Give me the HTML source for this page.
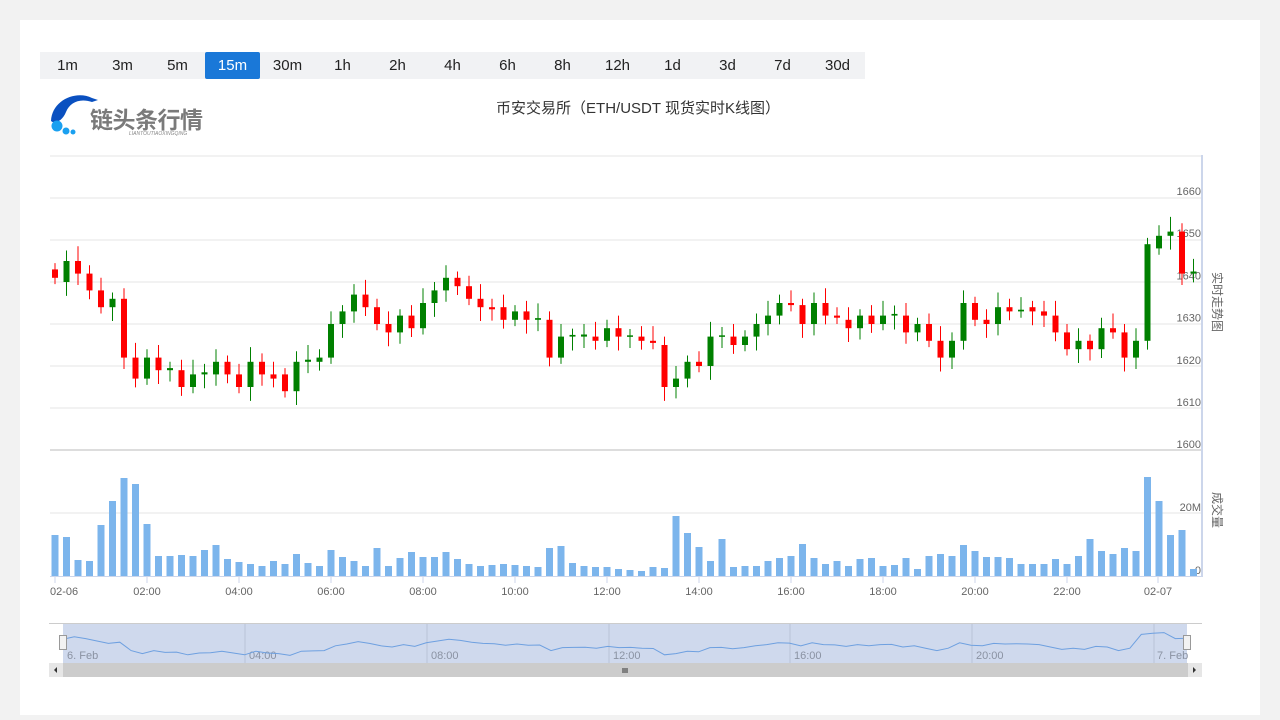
<!DOCTYPE html>
<html><head><meta charset="utf-8">
<style>
body{margin:0;background:#f2f2f2;font-family:"Liberation Sans","Noto Sans CJK SC",sans-serif;}
#card{position:absolute;left:20px;top:20px;width:1240px;height:695px;background:#fff;}
#tf{position:absolute;left:40px;top:52px;width:825px;height:27px;background:#f1f2f4;display:flex;}
#tf div{width:55px;height:27px;line-height:28px;text-align:center;font-size:15px;color:#222;}
#tf div.a{background:#1a78d8;color:#fff;border-radius:2px;}
svg{position:absolute;left:0;top:0;}
</style></head><body>
<div id="card"></div>
<div id="tf"><div>1m</div><div>3m</div><div>5m</div><div class="a">15m</div><div>30m</div><div>1h</div><div>2h</div><div>4h</div><div>6h</div><div>8h</div><div>12h</div><div>1d</div><div>3d</div><div>7d</div><div>30d</div></div>
<svg id="s" width="1280" height="720" xmlns="http://www.w3.org/2000/svg">
<g>
<path d="M51 121 C52 100 76 90 92 98 L98 100 L92 102 C80 98 70 102 66 112 C62 122 54 124 51 121Z" fill="#0a50c0"/>
<circle cx="57" cy="126" r="5.5" fill="#1aa0f0"/><circle cx="66" cy="131" r="3.5" fill="#1aa0f0"/><circle cx="73" cy="132" r="2.5" fill="#1aa0f0"/>
<text x="90" y="128" font-size="23" font-weight="bold" fill="#7a7a7a" letter-spacing="-0.5" font-family="Liberation Sans,Noto Sans CJK SC,sans-serif">链头条行情</text>
<text x="129" y="135" font-size="5" fill="#888" font-style="italic">LIANTOUTIAOXINGQING</text>
</g>
<text x="638" y="113" font-size="15" fill="#333" text-anchor="middle" font-family="Liberation Sans,Noto Sans CJK SC,sans-serif">币安交易所（ETH/USDT 现货实时K线图）</text>
<g id="g"></g>
</svg>
<script>
const C=[[1643,1641],[1640,1645],[1645,1642],[1642,1638],[1638,1634],[1634,1636],[1636,1622],[1622,1617],[1617,1622],[1622,1619],[1619,1619.5],[1619,1615],[1615,1618],[1618,1618.5],[1618,1621],[1621,1618],[1618,1615],[1615,1621],[1621,1618],[1618,1617],[1618,1614],[1614,1621],[1621,1621.5],[1621,1622],[1622,1630],[1630,1633],[1633,1637],[1637,1634],[1634,1630],[1630,1628],[1628,1632],[1632,1629],[1629,1635],[1635,1638],[1638,1641],[1641,1639],[1639,1636],[1636,1634],[1634,1633.5],[1634,1631],[1631,1633],[1633,1631],[1631,1631.4],[1631,1622],[1622,1627],[1627,1627.4],[1627,1627.5],[1627,1626],[1626,1629],[1629,1627],[1627,1627.3],[1627,1626],[1626,1625.5],[1625,1615],[1615,1617],[1617,1621],[1621,1620],[1620,1627],[1627,1627.3],[1627,1625],[1625,1627],[1627,1630],[1630,1632],[1632,1635],[1635,1634.5],[1634.5,1630],[1630,1635],[1635,1632],[1632,1631.5],[1631,1629],[1629,1632],[1632,1630],[1630,1632],[1632,1632.4],[1632,1628],[1628,1630],[1630,1626],[1626,1622],[1622,1626],[1626,1635],[1635,1631],[1631,1630],[1630,1634],[1634,1633],[1633,1633.4],[1634,1633],[1633,1632],[1632,1628],[1628,1624],[1624,1626],[1626,1624],[1624,1629],[1629,1628],[1628,1622],[1622,1626],[1626,1649],[1648,1651],[1651,1652],[1652,1642],[1642,1642.5]];
const V=[41,39,16,15,51,75,98,92,52,20,20,21,20,26,31,17,14,12,10,15,12,22,13,10,26,19,15,10,28,10,18,24,19,19,24,17,12,10,11,12,11,10,9,28,30,13,10,9,9,7,6,5,9,8,60,43,29,15,37,9,10,10,15,18,20,32,18,12,15,10,17,18,10,11,18,7,20,22,20,31,25,19,19,18,12,12,12,17,12,20,37,25,22,28,25,99,75,41,46,7];
let h='';
const py=p=>198+(1660-p)*4.2;
[1670,1660,1650,1640,1630,1620,1610].forEach(p=>{h+=`<line x1="50" x2="1202" y1="${py(p)}" y2="${py(p)}" stroke="#e6e6e6"/>`;});
h+=`<line x1="50" x2="1202" y1="450" y2="450" stroke="#ddd" stroke-width="2"/>`;
h+=`<line x1="50" x2="1202" y1="513" y2="513" stroke="#e6e6e6"/>`;
h+=`<line x1="50" x2="1202" y1="576.5" y2="576.5" stroke="#ccd6eb"/>`;
h+=`<line x1="1202" x2="1202" y1="155" y2="577" stroke="#ccd6eb" stroke-width="2"/>`;
[1660,1650,1640,1630,1620,1610,1600].forEach((p,i)=>{h+=`<text x="1201" y="${195+i*42.2}" font-size="11" fill="#666" text-anchor="end">${p}</text>`;});
h+=`<text x="1201" y="511" font-size="11" fill="#666" text-anchor="end">20M</text><text x="1201" y="574" font-size="11" fill="#666" text-anchor="end">0</text>`;
h+=`<text transform="translate(1213,272) rotate(90)" font-size="12" fill="#666" font-family="Noto Sans CJK SC,sans-serif">实时走势图</text>`;
h+=`<text transform="translate(1213,492) rotate(90)" font-size="12" fill="#666" font-family="Noto Sans CJK SC,sans-serif">成交量</text>`;
C.forEach((c,i)=>{const x=55+11.5*i;const up=c[1]>=c[0];const col=up?'#008000':'#ff0000';
const hi=Math.max(c[0],c[1])+1.5+(i*7%5)*0.5,lo=Math.min(c[0],c[1])-1.5-(i*3%4)*0.6;
const t=py(Math.max(c[0],c[1])),b=py(Math.min(c[0],c[1]));
h+=`<line x1="${x}" x2="${x}" y1="${py(hi)}" y2="${py(lo)}" stroke="${col}"/>`;
h+=`<rect x="${x-3}" y="${t}" width="6" height="${Math.max(b-t,1.5)}" fill="${col}"/>`;
h+=`<rect x="${x-3.5}" y="${576-V[i]}" width="7" height="${V[i]}" fill="#7cb5ec"/>`;});
const lab=['02-06','02:00','04:00','06:00','08:00','10:00','12:00','14:00','16:00','18:00','20:00','22:00','02-07'];
lab.forEach((l,i)=>{const x=i==0?55:55+92*i+(i==12?-1:0);h+=`<line x1="${x}" x2="${x}" y1="577" y2="583" stroke="#ccd6eb"/><text x="${i==0?50:x}" y="595" font-size="11" fill="#666" text-anchor="${i==0?'start':'middle'}">${l}</text>`;});
h+=`<line x1="49" x2="1202" y1="623.5" y2="623.5" stroke="#ccc"/>`;
h+=`<rect x="63" y="624" width="1124" height="39" fill="#cfd9ed"/>`;
[245,427,609,790,972,1154].forEach(x=>{h+=`<line x1="${x}" x2="${x}" y1="624" y2="663" stroke="#b8c2d6"/>`;});
[['6. Feb',67],['04:00',249],['08:00',431],['12:00',613],['16:00',794],['20:00',976],['7. Feb',1157]].forEach(a=>{h+=`<text x="${a[1]}" y="659" font-size="11" fill="#8a92a2">${a[0]}</text>`;});
let d='';C.forEach((c,i)=>{const x=63+i*11.35;const y=635+(1648-c[1])*0.6;d+=(i?'L':'M')+x.toFixed(1)+' '+y.toFixed(1);});
h+=`<path d="${d}" fill="none" stroke="#6ea0e0" stroke-width="1"/>`;
h+=`<rect x="59.5" y="635.5" width="7" height="14" fill="#f2f2f2" stroke="#999"/><rect x="1183.5" y="635.5" width="7" height="14" fill="#f2f2f2" stroke="#999"/>`;
h+=`<rect x="49" y="663" width="1153" height="14" fill="#ccc"/><rect x="49" y="663" width="14" height="14" fill="#e6e6e6"/><rect x="1188" y="663" width="14" height="14" fill="#e6e6e6"/>`;
h+=`<path d="M57 667 L54 670 L57 673Z" fill="#333"/><path d="M1193 667 L1196 670 L1193 673Z" fill="#333"/>`;
h+=`<path d="M623 668v5M625 668v5M627 668v5" stroke="#333"/>`;
document.getElementById('g').innerHTML=h;
</script>
</body></html>
